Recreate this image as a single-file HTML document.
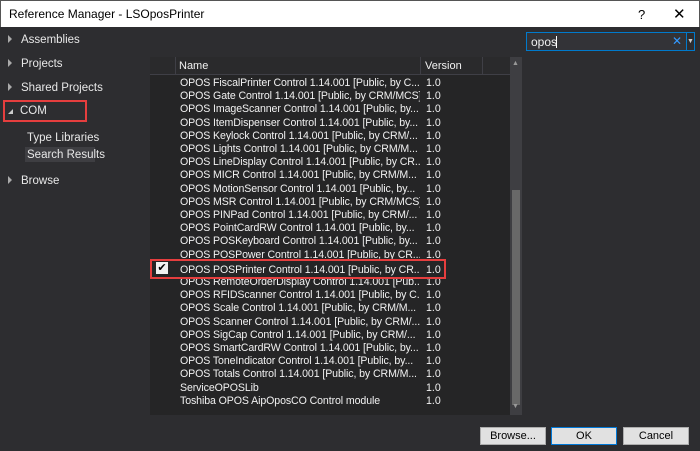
<!DOCTYPE html>
<html><head><style>
*{margin:0;padding:0;box-sizing:border-box}
body{width:700px;height:451px;background:#2d2d30;font-family:"Liberation Sans",sans-serif;font-size:11px;color:#f1f1f1;position:relative;overflow:hidden}
.a{position:absolute}
.title{left:0;top:0;width:700px;height:27px;background:#fff;color:#000;font-size:12px;line-height:27px;padding-left:8px;border:1px solid #555;border-bottom:none}
.tri{display:inline-block;width:0;height:0;border-top:4px solid transparent;border-bottom:4px solid transparent;border-left:4px solid #aaa;margin-right:9px}
.nav{left:8px;font-size:11.5px;color:#e8e8e8}
.list{left:150px;top:57px;width:372px;height:358px;background:#252526}
.hdr{left:0;top:0;width:360px;height:18px;background:#2a2a2c;border-bottom:1px solid #3f3f46}
.row{position:absolute;left:30px;height:13px;line-height:13px;white-space:nowrap;font-size:10.6px;letter-spacing:-0.1px}
.nm{display:inline-block;width:240px;overflow:hidden}
.v{position:absolute;left:246px;letter-spacing:0}
.btn{top:427px;height:18px;background:#e1e1e1;border:1px solid #adadad;color:#000;text-align:center;line-height:16px;font-size:11px}
</style></head><body>
<div class="a title">Reference Manager - LSOposPrinter<span style="position:absolute;left:637px;font-size:13px">?</span><span style="position:absolute;left:672px;font-size:15px">✕</span></div>
<div class="a nav" style="top:34px"><span class="tri"></span>Assemblies</div>
<div class="a nav" style="top:58px"><span class="tri"></span>Projects</div>
<div class="a nav" style="top:82px"><span class="tri"></span>Shared Projects</div>
<div class="a nav" style="top:105px"><span style="display:inline-block;width:0;height:0;border-left:5px solid transparent;border-bottom:5px solid #ccc;margin-right:7px"></span>COM</div>
<div class="a" style="left:3px;top:100px;width:84px;height:22px;border:2px solid #e53e3e"></div>
<div class="a nav" style="left:27px;top:132px">Type Libraries</div>
<div class="a" style="left:25px;top:147px;width:70px;height:15px;background:#3e3e42"></div>
<div class="a nav" style="left:27px;top:149px">Search Results</div>
<div class="a nav" style="top:175px"><span class="tri"></span>Browse</div>

<div class="a" style="left:526px;top:32px;width:161px;height:19px;background:#333337;border:1px solid #007acc"><span style="position:absolute;left:4px;top:2px;font-size:12px">opos</span><span style="position:absolute;left:29px;top:3px;width:1px;height:12px;background:#fff"></span><span style="position:absolute;left:145px;top:1px;color:#3399ff;font-size:12px">✕</span></div>
<div class="a" style="left:686px;top:32px;width:9px;height:19px;border:1px solid #007acc;color:#ccc;font-size:7px;text-align:center;line-height:17px">▼</div>

<div class="a list">
<div class="a hdr"></div>
<div class="a" style="left:25px;top:0;width:1px;height:18px;background:#3f3f46"></div>
<div class="a" style="left:270px;top:0;width:1px;height:18px;background:#3f3f46"></div>
<div class="a" style="left:332px;top:0;width:1px;height:18px;background:#3f3f46"></div>
<div class="a" style="left:29px;top:3px">Name</div><div class="a" style="left:275px;top:3px">Version</div>
<div class="a" style="left:360px;top:0;width:12px;height:358px;background:#3e3e42"></div>
<div class="a" style="left:362px;top:133px;width:8px;height:215px;background:#686868"></div>
<div class="a" style="left:362px;top:3px;color:#999;font-size:7px">▲</div>
<div class="a" style="left:362px;top:346px;color:#999;font-size:7px">▼</div>
<div id="rows"></div>
</div>
<script>
var n=["OPOS FiscalPrinter Control 1.14.001 [Public, by C...","OPOS Gate Control 1.14.001 [Public, by CRM/MCS]","OPOS ImageScanner Control 1.14.001 [Public, by...","OPOS ItemDispenser Control 1.14.001 [Public, by...","OPOS Keylock Control 1.14.001 [Public, by CRM/...","OPOS Lights Control 1.14.001 [Public, by CRM/M...","OPOS LineDisplay Control 1.14.001 [Public, by CR...","OPOS MICR Control 1.14.001 [Public, by CRM/M...","OPOS MotionSensor Control 1.14.001 [Public, by...","OPOS MSR Control 1.14.001 [Public, by CRM/MCS]","OPOS PINPad Control 1.14.001 [Public, by CRM/...","OPOS PointCardRW Control 1.14.001 [Public, by...","OPOS POSKeyboard Control 1.14.001 [Public, by...","OPOS POSPower Control 1.14.001 [Public, by CR...","OPOS POSPrinter Control 1.14.001 [Public, by CR...","OPOS RemoteOrderDisplay Control 1.14.001 [Pub...","OPOS RFIDScanner Control 1.14.001 [Public, by C...","OPOS Scale Control 1.14.001 [Public, by CRM/M...","OPOS Scanner Control 1.14.001 [Public, by CRM/...","OPOS SigCap Control 1.14.001 [Public, by CRM/...","OPOS SmartCardRW Control 1.14.001 [Public, by...","OPOS ToneIndicator Control 1.14.001 [Public, by...","OPOS Totals Control 1.14.001 [Public, by CRM/M...","ServiceOPOSLib","Toshiba OPOS AipOposCO Control module"];
var h="";for(var i=0;i<n.length;i++){var t=20+i*13.2+(i==14?2:0)+(i>14?1:0);h+='<div class="row" style="top:'+t+'px"><span class="nm">'+n[i]+'</span><span class="v">1.0</span></div>';}
document.getElementById("rows").innerHTML=h;
</script>
<div class="a" style="left:150px;top:259px;width:296px;height:20px;border:2px solid #e53e3e"></div>
<div class="a" style="left:156px;top:262px;width:12px;height:12px;background:#f1f1f1;color:#000;font-size:11px;line-height:12px;text-align:center">✔</div>

<div class="a btn" style="left:480px;width:66px">Browse...</div>
<div class="a btn" style="left:551px;width:66px;border:1px solid #0078d7">OK</div>
<div class="a btn" style="left:623px;width:66px">Cancel</div>
</body></html>
